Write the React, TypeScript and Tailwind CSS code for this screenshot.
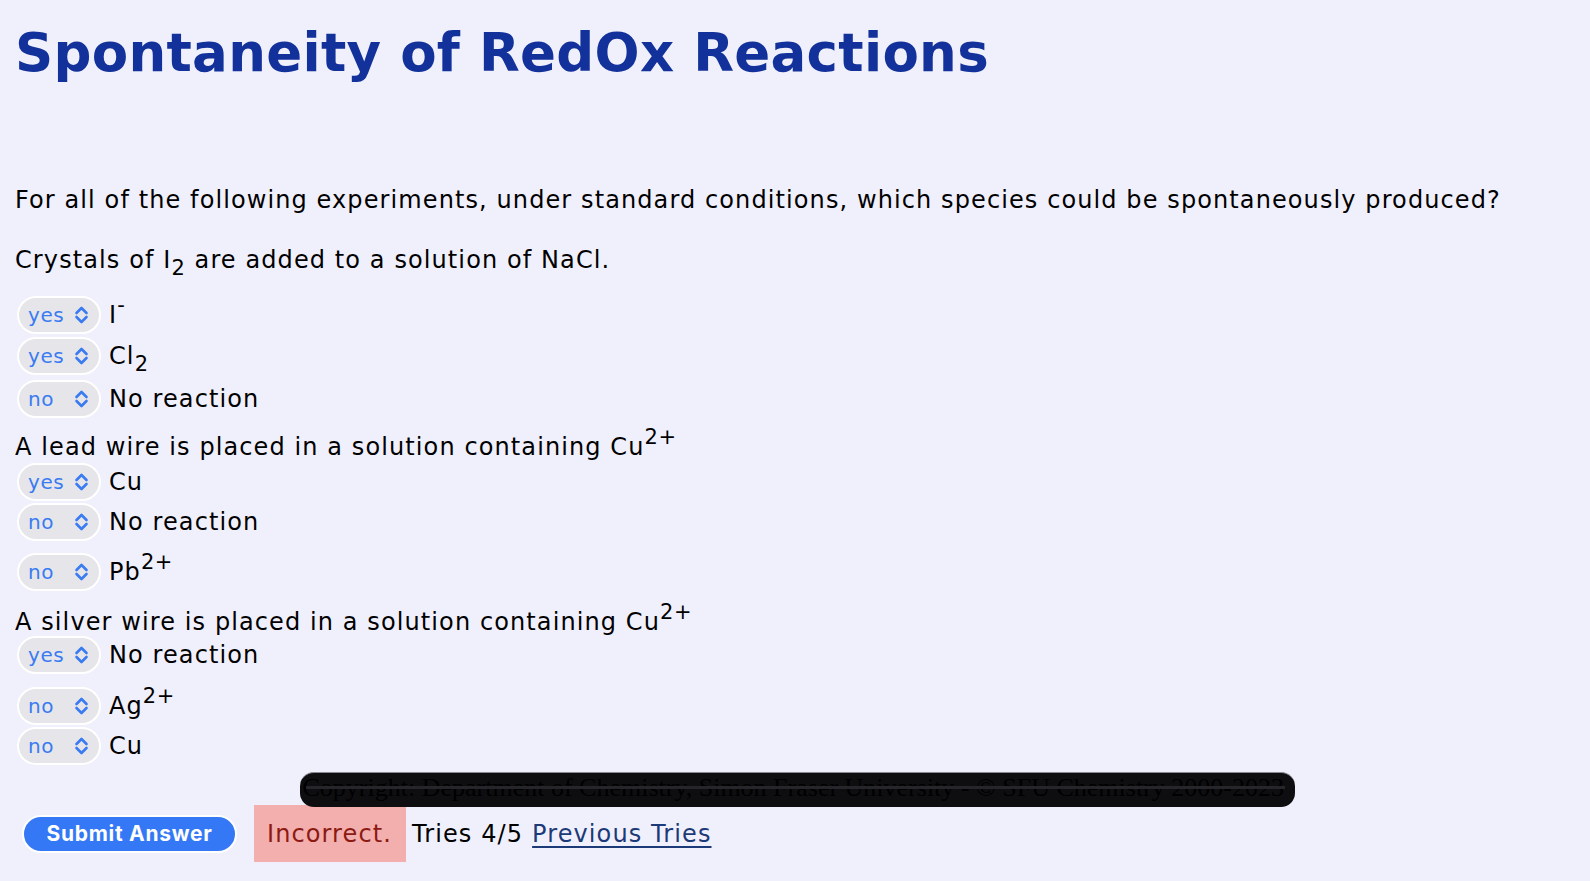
import type { ReactNode } from "react";

const FONT = "font-['DejaVu_Sans',Verdana,sans-serif]";

function Chevrons() {
  return (
    <svg className="w-[15px] h-[18px]" viewBox="0 0 15 18" fill="none" stroke="currentColor" strokeWidth={2.6} strokeLinecap="round" strokeLinejoin="round">
      <path d="M2.5 7l5-5 5 5" />
      <path d="M2.5 11l5 5 5-5" />
    </svg>
  );
}

function Pick({ value }: { value: "yes" | "no" }) {
  return (
    <div className="w-[84px] h-[38px] shrink-0 rounded-full border-2 border-white bg-[#e6e6ea] flex items-center justify-between pl-[9px] pr-[10px] text-[#3a7bf2] text-[20px] tracking-[0.6px]">
      <span>{value}</span>
      <Chevrons />
    </div>
  );
}

function Row({ value, children, className = "" }: { value: "yes" | "no"; children: ReactNode; className?: string }) {
  return (
    <div className={`flex items-center gap-[8px] ${className}`}>
      <Pick value={value} />
      <span className="text-[24px] text-black leading-none tracking-[1.1px]">{children}</span>
    </div>
  );
}

const Sup = ({ children }: { children: ReactNode }) => (
  <span className="inline-block text-[21px] relative -top-[11px] tracking-[0.5px]">{children}</span>
);
const Sub = ({ children }: { children: ReactNode }) => (
  <span className="inline-block text-[21px] relative top-[7px]">{children}</span>
);

export default function App() {
  return (
    <div className={`min-h-[881px] w-full bg-[#f0f0fc] ${FONT} text-black pl-[15px] pt-[22px]`}>
      <h1 className="text-[53px] font-bold text-[#12319a] leading-[62px] tracking-[0.3px]">Spontaneity of RedOx Reactions</h1>

      <p className="text-[24px] mt-[102px] leading-[28px] tracking-[1.1px]">
        For all of the following experiments, under standard conditions, which species could be spontaneously produced?
      </p>
      <p className="text-[24px] mt-[32px] leading-[28px] tracking-[1.1px]">
        Crystals of I<Sub>2</Sub> are added to a solution of NaCl.
      </p>

      <div className="mt-[21px] flex flex-col gap-[3px] pl-[2px]">
        <Row value="yes">I<Sup>-</Sup></Row>
        <Row value="yes">Cl<Sub>2</Sub></Row>
        <Row value="no" className="mt-[2px]">No reaction</Row>
      </div>

      <p className="text-[24px] mt-[15px] leading-[28px] tracking-[1.1px]">
        A lead wire is placed in a solution containing Cu<Sup>2+</Sup>
      </p>
      <div className="mt-[1px] flex flex-col gap-[2px] pl-[2px]">
        <Row value="yes">Cu</Row>
        <Row value="no">No reaction</Row>
        <Row value="no" className="mt-[10px]">Pb<Sup>2+</Sup></Row>
      </div>

      <p className="text-[24px] mt-[17px] leading-[28px] tracking-[1.1px]">
        A silver wire is placed in a solution containing Cu<Sup>2+</Sup>
      </p>
      <div className="-mt-[1px] flex flex-col gap-[2px] pl-[2px]">
        <Row value="yes">No reaction</Row>
        <Row value="no" className="mt-[11px]">Ag<Sup>2+</Sup></Row>
        <Row value="no">Cu</Row>
      </div>

      {/* footer line, scribbled over */}
      <div className="flex justify-center mt-[7px] pr-[15px]">
        <div className="relative h-[35px] w-[995px] ml-[4px] rounded-[14px] bg-[#0e0e11] border-t border-[#8a8a94] overflow-hidden">
          <span className="absolute left-[3px] top-[0px] whitespace-nowrap font-['Liberation_Serif',serif] text-[26px] leading-[30px] text-black">
            Copyright: Department of Chemistry, Simon Fraser University - © SFU Chemistry 2000-2023
          </span>
          <div className="absolute left-[6px] right-[10px] top-[13px] h-[3px] bg-[#26262a]" />
        </div>
      </div>

      <div className="flex items-center -mt-[2px]">
        <button className="ml-[7px] w-[215px] h-[38px] rounded-full border-2 border-white bg-[#3478f6] text-white font-['Inter',sans-serif] font-bold text-[21px] tracking-[0.7px]">
          Submit Answer
        </button>
        <div className="ml-[17px] h-[57px] w-[152px] bg-[#f3aeae] flex items-center pl-[13px] text-[24px] text-[#8c1a12] tracking-[1.1px]">
          Incorrect.
        </div>
        <span className="text-[24px] ml-[6px] tracking-[1.1px]">Tries 4/5</span>
        <a href="#" className="text-[24px] ml-[9px] text-[#1c3a78] underline underline-offset-[4px] decoration-[2px] tracking-[1.1px]">Previous Tries</a>
      </div>
    </div>
  );
}
